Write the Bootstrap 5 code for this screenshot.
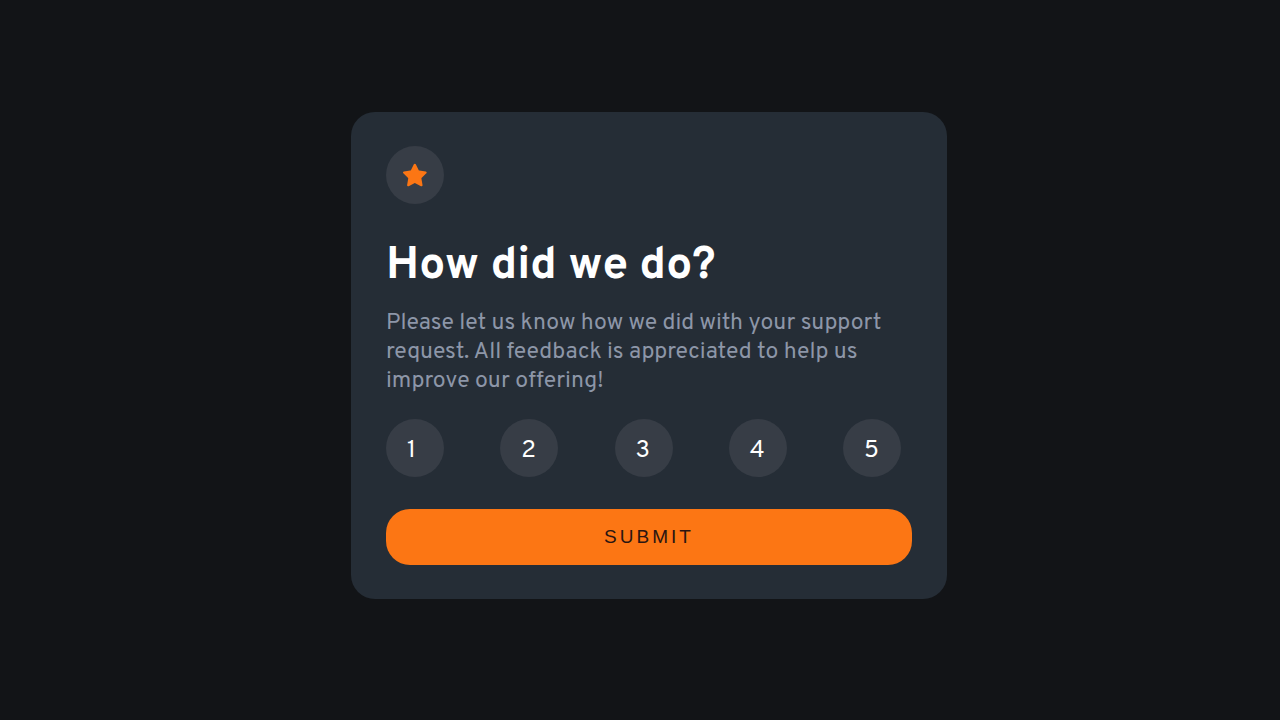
<!DOCTYPE html>
<html lang="en">
<head>
<meta charset="utf-8">
<meta name="viewport" content="width=device-width, initial-scale=1">
<title>Rating</title>
<link href="https://cdn.jsdelivr.net/npm/bootstrap@5.3.0/dist/css/bootstrap.min.css" rel="stylesheet">
<style>
body { background: #121417; color: #fff; font-family: Overpass, Roboto, "Liberation Sans", sans-serif; }
.page { padding: 16px 0 25px 18px; }
.rating-card { width: 100%; max-width: 596px; padding: 34px 35px; border-radius: 24px; background: #252d36; }
.disc { width: 58px; height: 58px; background: #373d46; }
.title { margin: 39px 0 18px; font-size: 46px; line-height: 48px; }
.copy { margin: 0 0 23px; font-size: 23px; line-height: 29px; color: #8d96a8; }
.scores { margin: 0 11px 32px 0; }
.score { border: 0; padding: 5px 0 0 21px; font-size: 24px; color: #fff; }
.score:hover, .score:focus { background: #fc7614; }
.submit { height: 56px; border: 0; padding: 0; border-radius: 24px; background: #fc7614; color: #2a1512; font-family: "Liberation Sans", Arial, sans-serif; font-size: 19px; letter-spacing: 3px; }
</style>
</head>
<body>
<main class="page min-vh-100 d-flex align-items-center justify-content-center">
  <section class="rating-card">
    <div class="disc rounded-circle d-flex align-items-center justify-content-center">
      <svg width="24" height="24" viewBox="0 0 17 16" aria-hidden="true"><path d="m9.067.43 1.99 4.031c.112.228.33.386.58.422l4.45.647a.772.772 0 0 1 .427 1.316l-3.22 3.138a.773.773 0 0 0-.222.683l.76 4.431a.772.772 0 0 1-1.12.813l-3.98-2.092a.773.773 0 0 0-.718 0l-3.98 2.092a.772.772 0 0 1-1.119-.813l.76-4.431a.77.77 0 0 0-.222-.683L.233 6.846A.772.772 0 0 1 .661 5.53l4.449-.647a.772.772 0 0 0 .58-.422L7.68.43a.774.774 0 0 1 1.387 0Z" fill="#fc7614"/></svg>
    </div>
    <h1 class="title fw-bold">How did we do?</h1>
    <p class="copy">Please let us know how we did with your support request. All feedback is appreciated to help us improve our offering!</p>
    <div class="scores d-flex justify-content-between" role="group" aria-label="Rating">
      <button type="button" class="score disc rounded-circle text-start">1</button>
      <button type="button" class="score disc rounded-circle text-start">2</button>
      <button type="button" class="score disc rounded-circle text-start">3</button>
      <button type="button" class="score disc rounded-circle text-start">4</button>
      <button type="button" class="score disc rounded-circle text-start">5</button>
    </div>
    <button type="submit" class="submit w-100 d-block">SUBMIT</button>
  </section>
</main>
<script src="https://cdn.jsdelivr.net/npm/bootstrap@5.3.0/dist/js/bootstrap.bundle.min.js"></script>
</body>
</html>
